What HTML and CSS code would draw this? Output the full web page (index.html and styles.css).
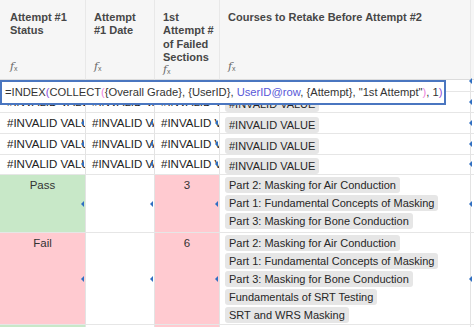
FILE: index.html
```html
<!DOCTYPE html>
<html>
<head>
<meta charset="utf-8">
<link rel="stylesheet" href="styles.css">
</head>
<body>
<div class="sheet">
  <div class="row head">
    <div class="cell hc first"><div class="htitle">Attempt #1<br>Status</div><span class="fx">f<sub>x</sub></span></div>
    <div class="cell hc"><div class="htitle">Attempt<br>#1 Date</div><span class="fx">f<sub>x</sub></span></div>
    <div class="cell hc"><div class="htitle">1st<br>Attempt&nbsp;#<br>of Failed<br>Sections</div><span class="fx">f<sub>x</sub></span></div>
    <div class="cell hc"><div class="htitle">Courses to Retake Before Attempt #2</div><span class="fx">f<sub>x</sub></span></div>
    <div class="cell hc end"></div>
  </div>

  <div class="row partial">
    <div class="cell first"></div>
    <div class="cell"></div>
    <div class="cell"></div>
    <div class="cell tagcell"><i class="tri top"></i></div>
    <div class="cell end"></div>
  </div>

  <div class="row h21">
    <div class="cell first txt">#INVALID VALUE<i class="tri"></i></div>
    <div class="cell txt">#INVALID VALUE<i class="tri"></i></div>
    <div class="cell txt">#INVALID VALUE<i class="tri"></i></div>
    <div class="cell tagcell"><span class="pill">#INVALID VALUE</span><i class="tri"></i></div>
    <div class="cell end"></div>
  </div>
  <div class="row h21">
    <div class="cell first txt">#INVALID VALUE<i class="tri"></i></div>
    <div class="cell txt">#INVALID VALUE<i class="tri"></i></div>
    <div class="cell txt">#INVALID VALUE<i class="tri"></i></div>
    <div class="cell tagcell"><span class="pill">#INVALID VALUE</span><i class="tri"></i></div>
    <div class="cell end"></div>
  </div>
  <div class="row h20">
    <div class="cell first txt">#INVALID VALUE<i class="tri"></i></div>
    <div class="cell txt">#INVALID VALUE<i class="tri"></i></div>
    <div class="cell txt">#INVALID VALUE<i class="tri"></i></div>
    <div class="cell tagcell"><span class="pill">#INVALID VALUE</span><i class="tri"></i></div>
    <div class="cell end"></div>
  </div>
  <div class="row h21">
    <div class="cell first txt">#INVALID VALUE<i class="tri"></i></div>
    <div class="cell txt">#INVALID VALUE<i class="tri"></i></div>
    <div class="cell txt">#INVALID VALUE<i class="tri"></i></div>
    <div class="cell tagcell"><span class="pill">#INVALID VALUE</span><i class="tri"></i></div>
    <div class="cell end"></div>
  </div>

  <div class="row pass">
    <div class="cell first green center">Pass<i class="tri"></i></div>
    <div class="cell"><i class="tri"></i></div>
    <div class="cell pink center">3<i class="tri"></i></div>
    <div class="cell tagcell stack">
      <span class="pill">Part 2: Masking for Air Conduction</span>
      <span class="pill">Part 1: Fundamental Concepts of Masking</span>
      <span class="pill">Part 3: Masking for Bone Conduction</span>
      <i class="tri"></i>
    </div>
    <div class="cell end"></div>
  </div>

  <div class="row fail">
    <div class="cell first pink center">Fail<i class="tri"></i></div>
    <div class="cell"><i class="tri"></i></div>
    <div class="cell pink center">6<i class="tri"></i></div>
    <div class="cell tagcell stack">
      <span class="pill">Part 2: Masking for Air Conduction</span>
      <span class="pill">Part 1: Fundamental Concepts of Masking</span>
      <span class="pill">Part 3: Masking for Bone Conduction</span>
      <span class="pill">Fundamentals of SRT Testing</span>
      <span class="pill">SRT and WRS Masking</span>
      <i class="tri"></i>
    </div>
    <div class="cell end"></div>
  </div>

  <div class="row last">
    <div class="cell first green"></div>
    <div class="cell"></div>
    <div class="cell pink"></div>
    <div class="cell"></div>
    <div class="cell end"></div>
  </div>

  <div class="formula">=INDEX<span class="p1">(</span>COLLECT<span class="p2">(</span>{Overall Grade}, {UserID}, <span class="ref">UserID@row</span>, {Attempt}, "1st Attempt"<span class="p2">)</span>, 1<span class="p1">)</span></div>
</div>
</body>
</html>
```

FILE: styles.css
```css
html, body {
  margin: 0;
  padding: 0;
  background: #ffffff;
  overflow: hidden;
}
body {
  width: 474px;
  height: 327px;
  font-family: "Liberation Sans", Arial, sans-serif;
  color: #222;
}
.sheet {
  position: relative;
  width: 474px;
  height: 327px;
  overflow: hidden;
}
.row {
  display: grid;
  grid-template-columns: 86px 69px 65px 251px 3px;
}
.cell {
  position: relative;
  box-sizing: border-box;
  border-right: 1px solid #e3e3e3;
  border-bottom: 1px solid #e6e6e6;
  overflow: hidden;
  white-space: nowrap;
}
.cell.end {
  border-right: none;
}
.head {
  height: 80px;
  background: #f6f6f6;
}
.head .cell {
  display: flex;
  flex-direction: column;
  justify-content: space-between;
  padding: 11px 2px 4px 8px;
  border-right: 1px solid #e8e8e8;
  border-bottom: 1px solid #dcdcdc;
}
.head .cell.first {
  padding-left: 10px;
}
.head .cell.end {
  border-right: none;
  padding: 0;
}
.htitle {
  font-weight: bold;
  font-size: 11px;
  line-height: 13.3px;
  color: #474747;
  white-space: normal;
}
.fx {
  font-family: "DejaVu Serif", "Liberation Serif", serif;
  font-style: italic;
  font-size: 11px;
  line-height: 12px;
  color: #666;
}
.fx sub {
  font-size: 7px;
  font-style: normal;
  font-family: "Liberation Sans", sans-serif;
  vertical-align: -1px;
}
.partial { height: 12px; }
.h21 { height: 21px; }
.h20 { height: 20px; }
.pass { height: 58px; }
.fail { height: 92px; }
.last { height: 10px; }

.txt {
  font-size: 11.5px;
  line-height: 20px;
  padding: 0 4px 0 6px;
  color: #222;
}
.txt.first { padding-left: 7px; }
.center {
  text-align: center;
  font-size: 11.5px;
  line-height: 14px;
  padding-top: 3px;
  color: #333;
}
.green { background: #c8e8c8; }
.pink { background: #ffcad0; }

.tagcell {
  padding: 2px 0 0 5px;
  overflow: visible;
}
.stack {
  display: flex;
  flex-direction: column;
  align-items: flex-start;
  gap: 2px;
  padding-top: 2px;
}
.pill {
  display: inline-block;
  background: #e6e6e6;
  border-radius: 3px;
  font-size: 11px;
  line-height: 16px;
  padding: 0 4px;
  color: #262626;
}
.tri {
  position: absolute;
  right: 1px;
  top: 50%;
  margin-top: -3px;
  width: 0;
  height: 0;
  border-top: 3px solid transparent;
  border-bottom: 3px solid transparent;
  border-right: 3px solid #2f6fc2;
}
.tagcell .tri {
  right: -2px;
}
.tri.top {
  top: 0;
  margin-top: -2px;
}

.formula {
  position: absolute;
  left: 0;
  top: 80px;
  width: 446px;
  height: 25px;
  box-sizing: border-box;
  border: 2px solid #4a76c0;
  background: #fff;
  font-size: 11.2px;
  line-height: 21px;
  padding-left: 3px;
  color: #333;
  white-space: nowrap;
  overflow: hidden;
}
.p1 { color: #8d4fd9; }
.p2 { color: #ec7fdc; }
.ref { color: #5858d8; }
```
